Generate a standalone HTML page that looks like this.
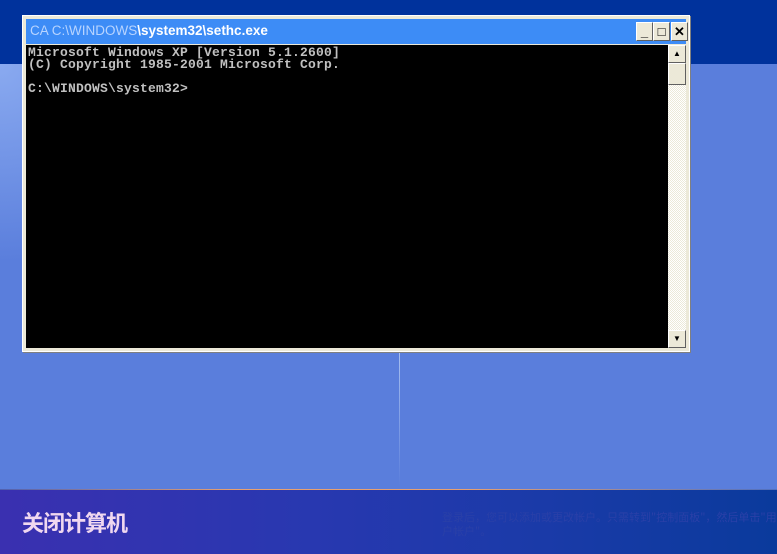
<!DOCTYPE html>
<html><head><meta charset="utf-8"><style>
*{margin:0;padding:0;box-sizing:border-box}
body{width:777px;height:554px;overflow:hidden;position:relative;background:#5a7edc;font-family:"Liberation Sans","Noto Sans CJK SC",sans-serif}
.top{position:absolute;left:0;top:0;width:777px;height:64px;background:#00329c}
.glow{position:absolute;left:0;top:64px;width:200px;height:200px;background:radial-gradient(circle at 0 0,#8aaaf0,rgba(90,126,220,0) 70%)}
.vline{position:absolute;left:399px;top:352px;width:1px;height:135px;background:linear-gradient(#a8c0f0,rgba(168,192,240,0))}
.bot{position:absolute;left:0;top:490px;width:777px;height:64px;background:linear-gradient(90deg,#3a30b0,#2838b0 40%,#1a3aa8 70%,#0a3a9c)}
.oline{position:absolute;left:0;top:489px;width:777px;height:2px;background:linear-gradient(90deg,#5060b0,#e8a070 30%,#e8a070 60%,#5070c0)}
.shut{position:absolute;left:22px;top:506px;color:#f0d8f0;font-size:22px;font-weight:bold;letter-spacing:-1px;font-family:"Noto Sans CJK SC",sans-serif}
.hint{position:absolute;left:442px;top:510px;color:#2a40a8;font-size:11px;line-height:14px;width:340px;font-family:"Noto Sans CJK SC",sans-serif}
.win{position:absolute;left:22px;top:15px;width:668px;height:337px;background:#ece9d8;border:1px solid #fff;box-shadow:1px 1px 0 #808080}
.title{position:absolute;left:3px;top:3px;width:660px;height:25px;background:#3d8cf6}
.title span{position:absolute;left:4px;top:4px;color:#fff;font-weight:bold;font-size:13.5px}
.title span i{font-style:normal;font-weight:normal;color:#b8d4ff}
.btn{position:absolute;top:3px;width:17px;height:19px;background:#ece9d8;border:1px solid #fff;border-right-color:#606060;border-bottom-color:#606060;font-size:13px;font-weight:bold;text-align:center;line-height:17px;color:#000}
.con{position:absolute;left:3px;top:29px;width:642px;height:303px;background:#000;color:#c0c0c0;font-family:"Liberation Mono",monospace;font-weight:bold;font-size:13px;letter-spacing:0.2px;line-height:12px;padding:2px 2px;white-space:pre}
.sb{position:absolute;left:645px;top:29px;width:18px;height:303px;background:repeating-conic-gradient(#ece9d8 0 25%,#fff 0 50%) 0 0/2px 2px}
.sbb{position:absolute;left:0;width:18px;height:18px;background:#ece9d8;border:1px solid #fff;border-right-color:#606060;border-bottom-color:#606060;font-size:8px;text-align:center;line-height:16px}
</style></head><body>
<div class="top"></div><div class="glow"></div><div class="vline"></div>
<div class="oline"></div><div class="bot"></div>
<div class="shut">关闭计算机</div>
<div class="hint">登录后，您可以添加或更改帐户。只需转到"控制面板"，然后单击"用户帐户"。</div>
<div class="win">
<div class="title"><span><i>CA C:\WINDOWS</i>\system32\sethc.exe</span>
<div class="btn" style="left:610px">_</div><div class="btn" style="left:627px">□</div><div class="btn" style="left:645px">✕</div></div>
<div class="con">Microsoft Windows XP [Version 5.1.2600]
(C) Copyright 1985-2001 Microsoft Corp.

C:\WINDOWS\system32&gt;</div>
<div class="sb"><div class="sbb" style="top:0">▲</div><div class="sbb" style="top:18px;height:22px"></div><div class="sbb" style="top:285px">▼</div></div>
</div>
</body></html>
